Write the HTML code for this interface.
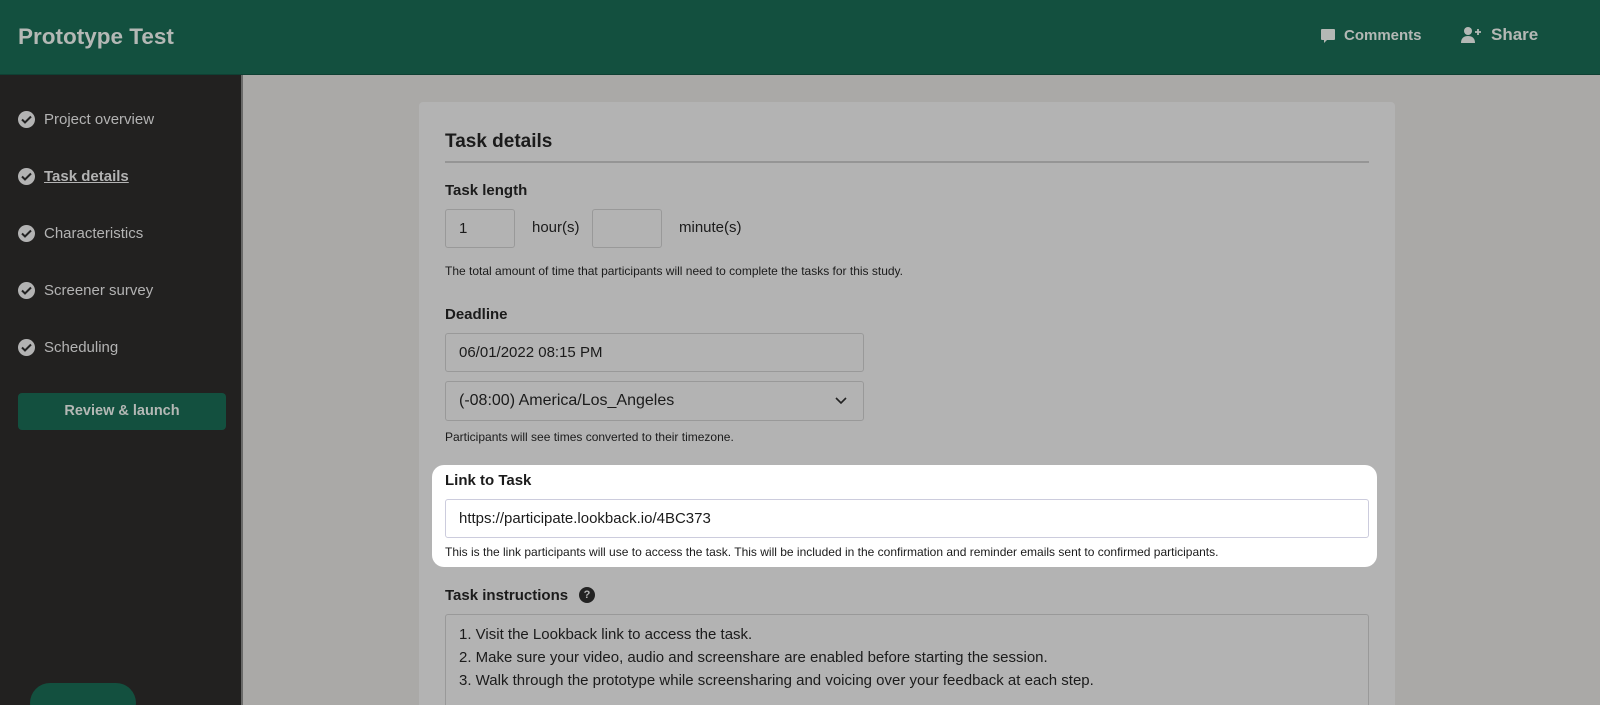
<!DOCTYPE html>
<html style="overflow:hidden;width:1600px;height:705px"><head><meta charset="utf-8"><style>
*{box-sizing:border-box;margin:0;padding:0}
body{width:1600px;height:705px;overflow:hidden;background:#aaa9a7;font-family:"Liberation Sans",sans-serif;color:#1b1b1b;position:relative}
.hdr{position:absolute;left:0;top:0;width:1600px;height:75px;background:#13503f;border-bottom:1px solid #0f4033}
.hdr h1{position:absolute;left:18px;top:24px;font-size:22.5px;font-weight:bold;color:#b4b8b5}
.hb{position:absolute;top:27px;color:#b4b8b5;font-weight:bold;font-size:15px;display:flex;align-items:center;gap:8px}
.side{position:absolute;left:0;top:75px;width:243px;height:630px;background:#222120;border-right:2px solid #6a6a69}
.it{position:absolute;left:18px;display:flex;align-items:center;gap:9px;color:#b3b3b3;font-size:15px}
.ck{width:17px;height:17px;border-radius:50%;background:#b3b3b3;display:flex;align-items:center;justify-content:center}
.btn{position:absolute;left:18px;top:318px;width:208px;height:37px;background:#13503f;border-radius:4px;color:#b4b8b5;font-weight:bold;font-size:14.5px;text-align:center;line-height:37px}
.pill{position:absolute;left:30px;top:608px;width:106px;height:40px;border-radius:20px;background:#13503f}
.card{position:absolute;left:419px;top:102px;width:976px;height:603px;background:#b3b3b3;border-radius:4px 4px 0 0}
.abs{position:absolute}
.lbl{font-weight:bold;font-size:15px}
.inp{position:absolute;border:1px solid #999;border-radius:3px;background:#b3b3b3;font-size:15px;padding-left:13px;display:flex;align-items:center}
.small{font-size:12px}
.hl{position:absolute;left:432px;top:465px;width:945px;height:102px;background:#fff;border-radius:12px}
</style></head><body>
<div class="hdr"><h1>Prototype Test</h1>
<div class="hb" style="left:1320px"><svg width="16" height="16" viewBox="0 0 16 16"><path d="M2 1h12a1 1 0 0 1 1 1v9a1 1 0 0 1-1 1H7l-3 3v-3H2a1 1 0 0 1-1-1V2a1 1 0 0 1 1-1z" fill="#b4b8b5"/></svg>Comments</div>
<div class="hb" style="left:1461px;top:25px;font-size:17px"><svg width="22" height="18" viewBox="0 0 22 18"><circle cx="7" cy="5" r="4" fill="#b4b8b5"/><path d="M0 17c0-5 3-7 7-7s7 2 7 7z" fill="#b4b8b5"/><path d="M17 3v6M14 6h6" stroke="#b4b8b5" stroke-width="1.8"/></svg>Share</div>
</div>
<div class="side">
<div class="it" style="top:36px"><span class="ck"><svg width="11" height="9" viewBox="0 0 11 9"><path d="M1 4.5l3 3 6-6" stroke="#222" stroke-width="2" fill="none"/></svg></span>Project overview</div>
<div class="it" style="top:93px"><span class="ck"><svg width="11" height="9" viewBox="0 0 11 9"><path d="M1 4.5l3 3 6-6" stroke="#222" stroke-width="2" fill="none"/></svg></span><b style="text-decoration:underline">Task details</b></div>
<div class="it" style="top:150px"><span class="ck"><svg width="11" height="9" viewBox="0 0 11 9"><path d="M1 4.5l3 3 6-6" stroke="#222" stroke-width="2" fill="none"/></svg></span>Characteristics</div>
<div class="it" style="top:207px"><span class="ck"><svg width="11" height="9" viewBox="0 0 11 9"><path d="M1 4.5l3 3 6-6" stroke="#222" stroke-width="2" fill="none"/></svg></span>Screener survey</div>
<div class="it" style="top:264px"><span class="ck"><svg width="11" height="9" viewBox="0 0 11 9"><path d="M1 4.5l3 3 6-6" stroke="#222" stroke-width="2" fill="none"/></svg></span>Scheduling</div>
<div class="btn">Review &amp; launch</div>
<div class="pill"></div>
</div>
<div class="card"></div>
<div class="abs" style="left:445px;top:131px;font-size:19px;font-weight:bold">Task details</div>
<div class="abs" style="left:445px;top:161px;width:924px;height:2px;background:#959595"></div>
<div class="abs lbl" style="left:445px;top:182px">Task length</div>
<div class="inp" style="left:445px;top:209px;width:70px;height:39px">1</div>
<div class="abs" style="left:532px;top:219px;font-size:15px">hour(s)</div>
<div class="inp" style="left:592px;top:209px;width:70px;height:39px"></div>
<div class="abs" style="left:679px;top:219px;font-size:15px">minute(s)</div>
<div class="abs small" style="left:445px;top:264px">The total amount of time that participants will need to complete the tasks for this study.</div>
<div class="abs lbl" style="left:445px;top:306px">Deadline</div>
<div class="inp" style="left:445px;top:333px;width:419px;height:39px">06/01/2022 08:15 PM</div>
<div class="inp" style="left:445px;top:381px;width:419px;height:40px;font-size:16px">(-08:00) America/Los_Angeles
<svg style="position:absolute;right:16px;top:15px" width="12" height="8" viewBox="0 0 12 8"><path d="M1 1l5 5 5-5" stroke="#222" stroke-width="1.6" fill="none"/></svg></div>
<div class="abs small" style="left:445px;top:430px">Participants will see times converted to their timezone.</div>
<div class="hl"></div>
<div class="abs lbl" style="left:445px;top:472px">Link to Task</div>
<div class="inp" style="left:445px;top:499px;width:924px;height:39px;background:#fff;border-color:#ccd">https://participate.lookback.io/4BC373</div>
<div class="abs small" style="left:445px;top:545px">This is the link participants will use to access the task. This will be included in the confirmation and reminder emails sent to confirmed participants.</div>
<div class="abs lbl" style="left:445px;top:587px">Task instructions</div>
<div class="abs" style="left:579px;top:587px;width:16px;height:16px;border-radius:50%;background:#222;color:#b3b3b3;font-size:11px;font-weight:bold;text-align:center;line-height:16px">?</div>
<div class="inp" style="left:445px;top:614px;width:924px;height:91px;align-items:flex-start;padding-top:8px;line-height:23px;font-size:15px;display:block;border-bottom:none;border-radius:3px 3px 0 0;overflow:hidden">1. Visit the Lookback link to access the task.<br>2. Make sure your video, audio and screenshare are enabled before starting the session.<br>3. Walk through the prototype while screensharing and voicing over your feedback at each step.</div>
</body></html>
